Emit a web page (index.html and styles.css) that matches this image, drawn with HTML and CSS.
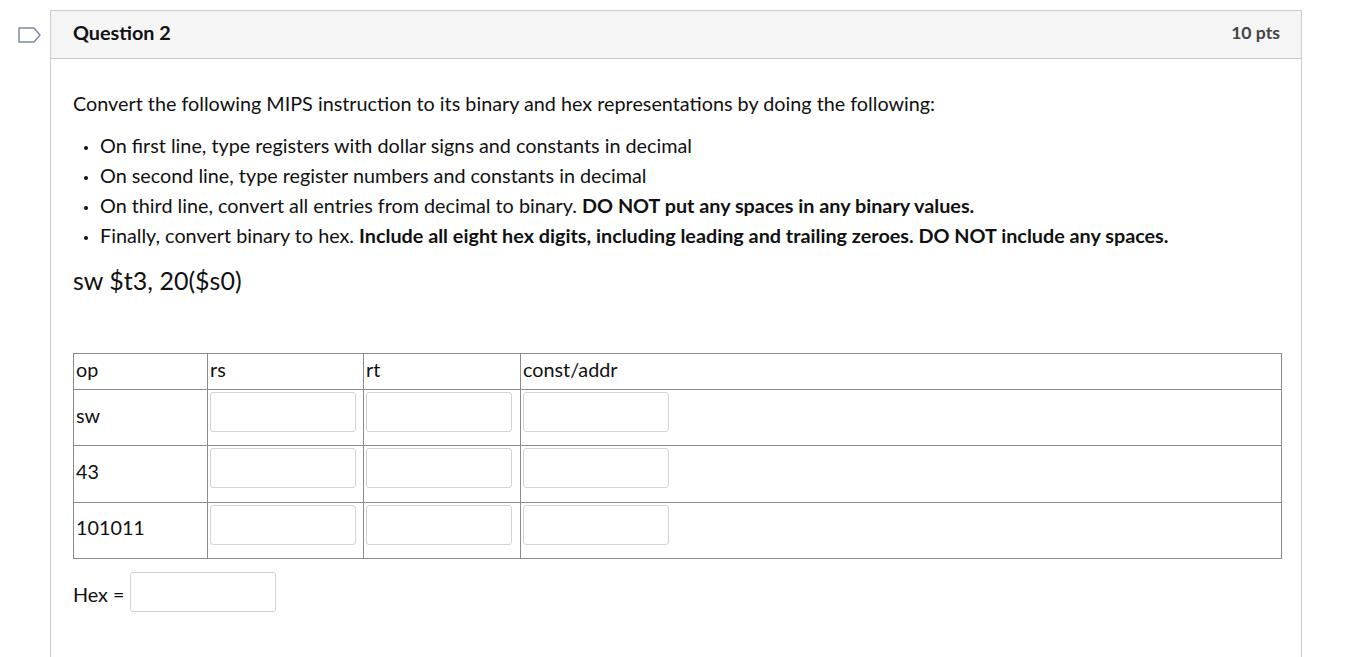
FILE: index.html
```html
<!DOCTYPE html>
<html>
<head>
<meta charset="utf-8">
<link rel="stylesheet" href="styles.css">
</head>
<body>
<div class="page">
  <div class="flag-col">
    <svg class="flag" width="24" height="16" viewBox="0 0 24 16">
      <path d="M1 1 H16 L22 8 L16 15 H1 Z" fill="none" stroke="#7b8e9f" stroke-width="1.5" stroke-linejoin="round"/>
    </svg>
  </div>
  <div class="card">
    <div class="card-header">
      <span class="q-title">Question 2</span>
      <span class="q-pts">10 pts</span>
    </div>
    <div class="card-body">
      <p class="intro">Convert the following MIPS instruction to its binary and hex representations by doing the following:</p>
      <ul class="steps">
        <li>On first line, type registers with dollar signs and constants in decimal</li>
        <li>On second line, type register numbers and constants in decimal</li>
        <li>On third line, convert all entries from decimal to binary. <strong>DO NOT put any spaces in any binary values.</strong></li>
        <li>Finally, convert binary to hex. <strong>Include all eight hex digits, including leading and trailing zeroes. DO NOT include any spaces.</strong></li>
      </ul>
      <p class="instr">sw $t3, 20($s0)</p>
      <table class="grid">
        <tr class="head">
          <td class="c-op">op</td>
          <td class="c-rs">rs</td>
          <td class="c-rt">rt</td>
          <td class="c-ca">const/addr</td>
        </tr>
        <tr>
          <td>sw</td>
          <td class="in"><input class="box" type="text"></td>
          <td class="in"><input class="box" type="text"></td>
          <td class="in"><input class="box" type="text"></td>
        </tr>
        <tr>
          <td>43</td>
          <td class="in"><input class="box" type="text"></td>
          <td class="in"><input class="box" type="text"></td>
          <td class="in"><input class="box" type="text"></td>
        </tr>
        <tr>
          <td>101011</td>
          <td class="in"><input class="box" type="text"></td>
          <td class="in"><input class="box" type="text"></td>
          <td class="in"><input class="box" type="text"></td>
        </tr>
      </table>
      <div class="hex-row">
        <span class="hex-label">Hex =</span>
        <input class="box" type="text">
      </div>
    </div>
  </div>
</div>
</body>
</html>
```

FILE: styles.css
```css
html, body {
  margin: 0;
  padding: 0;
  background: #fff;
}
body {
  font-family: Lato, "Noto Sans", sans-serif;
  color: #111;
  font-size: 19.8px;
}
.page {
  display: flex;
  padding-top: 10px;
}
.flag-col {
  width: 50px;
  flex: none;
}
.flag {
  display: block;
  margin: 17px 0 0 18px;
}
.card {
  width: 1250px;
  border: 1px solid #c7cdd1;
  border-bottom: none;
  height: 700px;
}
.card-header {
  height: 47px;
  background: #f5f5f5;
  border-bottom: 1px solid #c7cdd1;
  display: flex;
  align-items: center;
  justify-content: space-between;
  padding: 0 21px 0 22px;
}
.q-title {
  font-weight: 700;
  font-size: 19.8px;
  color: #111;
  position: relative;
  top: -3px;
}
.q-pts {
  font-weight: 700;
  font-size: 17.6px;
  color: #444;
  position: relative;
  top: -2px;
}
.card-body {
  padding: 29px 21px 0 22px;
}
.intro {
  margin: 0;
  line-height: 30px;
}
.steps {
  margin: 12px 0 0 0;
  padding-left: 27px;
  list-style: none;
}
.steps li {
  line-height: 30px;
  position: relative;
}
.steps li::before {
  content: "";
  position: absolute;
  left: -16px;
  top: 16px;
  width: 4px;
  height: 4px;
  border-radius: 50%;
  background: #111;
}
.instr {
  margin: 15px 0 0 0;
  font-size: 25px;
  line-height: 30px;
}
.grid {
  margin-top: 58px;
  border-collapse: collapse;
  width: 1209px;
}
.grid td {
  border: 1px solid #8c8c8c;
  padding: 0 2px 6px 2px;
  vertical-align: middle;
  height: 49.4px;
}
.grid td.in {
  vertical-align: top;
  padding: 2px 2px 0 2px;
  height: 53.4px;
}
.grid tr.head td {
  height: 30px;
  padding-bottom: 5px;
}
.c-op { width: 129px; }
.c-rs { width: 151px; }
.c-rt { width: 152px; }
.box {
  display: block;
  box-sizing: border-box;
  width: 146px;
  height: 40px;
  border: 1px solid #d4d4d4;
  border-radius: 3px;
  background: #fff;
  margin: 0;
  padding: 0 6px;
  font: inherit;
}
.hex-row {
  margin-top: 13px;
  display: flex;
  align-items: center;
  gap: 5px;
  height: 40px;
}
.hex-label {
  position: relative;
  top: 2px;
}
```
